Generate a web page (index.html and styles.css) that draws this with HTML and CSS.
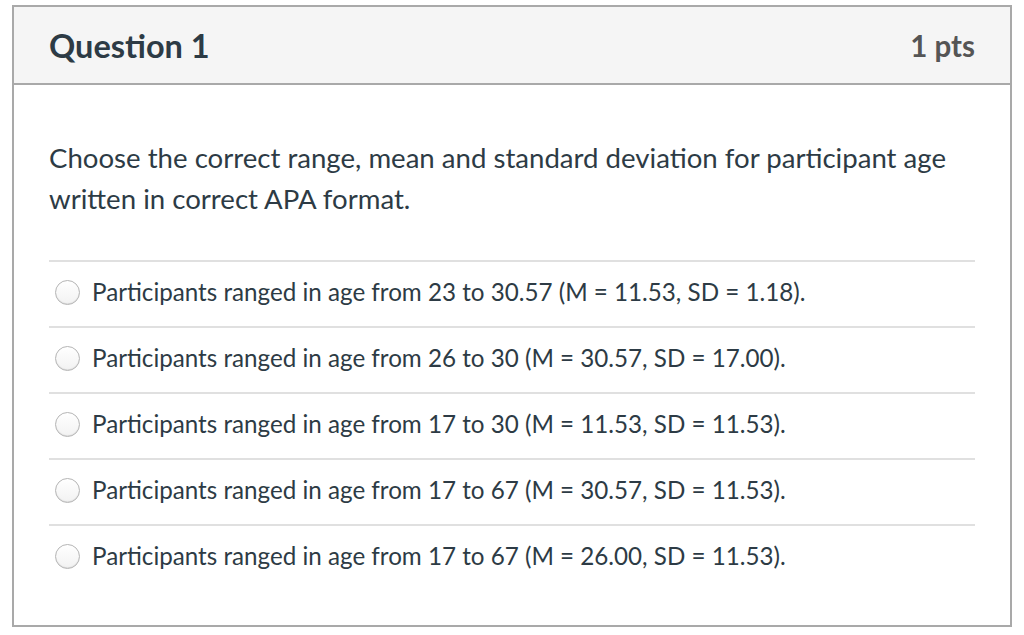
FILE: index.html
```html
<!DOCTYPE html>
<html>
<head>
<meta charset="utf-8">
<link rel="stylesheet" href="styles.css">
</head>
<body>
<div class="question">
  <div class="header">
    <h2 class="title">Question 1</h2>
    <span class="points">1 pts</span>
  </div>
  <div class="body">
    <p class="prompt">Choose the correct range, mean and standard deviation for participant age written in correct APA format.</p>
    <ul class="answers">
      <li class="answer"><span class="radio"></span><span class="label">Participants ranged in age from 23 to 30.57 (M = 11.53, SD = 1.18).</span></li>
      <li class="answer"><span class="radio"></span><span class="label">Participants ranged in age from 26 to 30 (M = 30.57, SD = 17.00).</span></li>
      <li class="answer"><span class="radio"></span><span class="label">Participants ranged in age from 17 to 30 (M = 11.53, SD = 11.53).</span></li>
      <li class="answer"><span class="radio"></span><span class="label">Participants ranged in age from 17 to 67 (M = 30.57, SD = 11.53).</span></li>
      <li class="answer"><span class="radio"></span><span class="label">Participants ranged in age from 17 to 67 (M = 26.00, SD = 11.53).</span></li>
    </ul>
  </div>
</div>
</body>
</html>
```
FILE: styles.css
```css
* { box-sizing: border-box; }
html, body { margin: 0; padding: 0; background: #fff; }
body { font-family: Lato, "Open Sans", sans-serif; color: #2d3b45; }

.question {
  margin: 5px 0 0 12px;
  width: 1000px;
  border: 2px solid #a9a9a9;
}

.header {
  height: 78px;
  background: #f5f5f5;
  border-bottom: 2px solid #a9a9a9;
  display: flex;
  align-items: center;
  justify-content: space-between;
  padding: 0 35px 0 35px;
}
.title {
  margin: 0;
  font-size: 32.5px;
  font-weight: 700;
  color: #2d3b45;
}
.points {
  font-size: 29.5px;
  font-weight: 700;
  color: #555;
}

.body {
  padding: 52px 35px 35px 35px;
}
.prompt {
  margin: 0 0 41px 0;
  font-size: 27.6px;
  line-height: 41px;
}
.answers {
  list-style: none;
  margin: 0;
  padding: 0;
}
.answer {
  height: 66px;
  border-top: 2px solid #e0e0e0;
  display: flex;
  align-items: center;
  padding-left: 6px;
  padding-bottom: 6px;
}
.radio {
  width: 25px;
  height: 25px;
  border-radius: 50%;
  border: 1px solid #b5b5b5;
  background: linear-gradient(#fff, #f2f2f2);
  box-shadow: inset 0 -1px 1px rgba(0,0,0,0.08);
  flex: none;
  margin-right: 12px;
  position: relative;
  top: 1px;
}
.label {
  font-size: 24.2px;
}
```
